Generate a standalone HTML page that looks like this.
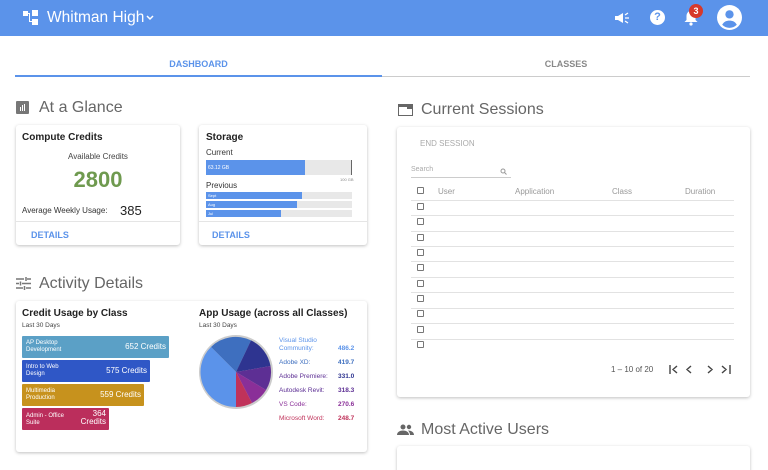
<!DOCTYPE html><html><head><style>
*{box-sizing:border-box;margin:0;padding:0}
html,body{width:768px;height:470px;overflow:hidden}
body{background:#fff;font-family:"Liberation Sans",sans-serif;position:relative;color:#222}
.a{position:absolute}
.card{position:absolute;background:#fff;border-radius:3px;box-shadow:0 1px 3px rgba(0,0,0,.25)}
.h{font-size:16px;color:#666}
.lnk{color:#5b93ea;font-size:9px;font-weight:bold}
.row{position:absolute;left:14px;width:323px;height:1px;background:#e2e2e2}
.cb{position:absolute;left:20px;width:7px;height:7px;border:1px solid #777;border-radius:1px}
.bar{position:absolute;left:6px;color:#fff;font-size:6px;height:19px;border-radius:1px}
</style></head><body>
<div class="a" style="left:0;top:0;width:768px;height:36px;background:#5b93ea"></div>
<svg class="a" style="left:23px;top:10px" width="16" height="16" viewBox="0 0 16 16" fill="#fff"><rect x="0" y="1" width="5" height="5"/><rect x="9" y="0" width="6" height="6"/><rect x="9" y="9" width="6" height="6"/><rect x="5" y="3" width="2" height="1"/><rect x="6" y="3" width="1" height="9"/><rect x="6" y="11" width="3" height="1"/></svg>
<div class="a" style="left:47px;top:9px;font-size:15.5px;color:#fff">Whitman High</div>
<svg class="a" style="left:146px;top:15px" width="8" height="6"><path d="M1 1l3 3 3-3" stroke="#fff" stroke-width="1.5" fill="none"/></svg>
<svg class="a" style="left:614px;top:11px" width="16" height="14" viewBox="0 0 16 14" fill="#fff"><path d="M1 5h3l5-3v10l-5-3H1z"/><path d="M11 4l3-2M11 7h4M11 10l3 2" stroke="#fff" stroke-width="1.3"/></svg>
<div class="a" style="left:650px;top:10px;width:15px;height:15px;border-radius:50%;background:#fff;color:#5b93ea;font-size:11px;font-weight:bold;text-align:center;line-height:15px">?</div>
<svg class="a" style="left:684px;top:9px" width="14" height="17" viewBox="0 0 14 17" fill="#fff"><path d="M7 2c3 0 4.5 2.5 4.5 5v4l2 2H.5l2-2V7C2.5 4.5 4 2 7 2z"/><circle cx="7" cy="15" r="1.6"/></svg>
<div class="a" style="left:689px;top:4px;width:14px;height:14px;border-radius:50%;background:#d6382b;color:#fff;font-size:9px;font-weight:bold;text-align:center;line-height:14px">3</div>
<svg class="a" style="left:717px;top:5px" width="25" height="25" viewBox="0 0 24 24"><circle cx="12" cy="12" r="12" fill="#fff"/><circle cx="12" cy="9" r="4" fill="#5b93ea"/><path d="M5 19c1.5-3 4-4 7-4s5.5 1 7 4c-2 2-4.5 3-7 3s-5-1-7-3z" fill="#5b93ea"/></svg>

<div class="a" style="left:15px;top:59px;width:367px;text-align:center;font-size:9px;font-weight:bold;color:#5b93ea">DASHBOARD</div>
<div class="a" style="left:382px;top:59px;width:368px;text-align:center;font-size:9px;font-weight:bold;color:#888">CLASSES</div>
<div class="a" style="left:15px;top:75px;width:367px;height:2px;background:#5b93ea"></div>
<div class="a" style="left:382px;top:76px;width:368px;height:1px;background:#ccc"></div>

<div class="a" style="left:16px;top:101px;width:13px;height:13px;background:#777;border-radius:1px"></div>
<div class="a" style="left:20px;top:107px;width:1px;height:4px;background:#fff"></div><div class="a" style="left:22px;top:105px;width:1px;height:6px;background:#fff"></div><div class="a" style="left:24px;top:104px;width:1px;height:7px;background:#fff"></div>
<div class="a h" style="left:39px;top:99px">At a Glance</div>

<div class="card" style="left:16px;top:125px;width:164px;height:120px">
<div class="a" style="left:6px;top:7px;font-size:10px;font-weight:bold">Compute Credits</div>
<div class="a" style="left:0;top:27px;width:164px;text-align:center;font-size:8px;color:#444">Available Credits</div>
<div class="a" style="left:0;top:42px;width:164px;text-align:center;font-size:22px;font-weight:bold;color:#6f9a4f">2800</div>
<div class="a" style="left:6px;top:81px;font-size:8px;color:#333">Average Weekly Usage:</div>
<div class="a" style="left:104px;top:78px;font-size:13px;color:#222">385</div>
<div class="a" style="left:0;top:96px;width:164px;height:1px;background:#e5e5e5"></div>
<div class="a lnk" style="left:15px;top:105px">DETAILS</div></div>

<div class="card" style="left:199px;top:125px;width:168px;height:120px">
<div class="a" style="left:7px;top:7px;font-size:10px;font-weight:bold">Storage</div>
<div class="a" style="left:7px;top:23px;font-size:8px;color:#333">Current</div>
<div class="a" style="left:7px;top:35px;width:146px;height:15px;background:#e8e8e8;border-right:1px solid #666"></div>
<div class="a" style="left:7px;top:35px;width:99px;height:15px;background:#5b93ea;color:#fff;font-size:5px;padding:5px 2px">63.12 GB</div>
<div class="a" style="left:141px;top:52px;font-size:4px;color:#888">100 GB</div>
<div class="a" style="left:7px;top:56px;font-size:8px;color:#333">Previous</div>
<div class="a" style="left:7px;top:67px;width:146px;height:7px;background:#e8e8e8"></div>
<div class="a" style="left:7px;top:67px;width:96px;height:7px;background:#5b93ea;color:#fff;font-size:4px;padding:1px 2px">Sept</div>
<div class="a" style="left:7px;top:76px;width:146px;height:7px;background:#e8e8e8"></div>
<div class="a" style="left:7px;top:76px;width:91px;height:7px;background:#5b93ea;color:#fff;font-size:4px;padding:1px 2px">Aug</div>
<div class="a" style="left:7px;top:85px;width:146px;height:7px;background:#e8e8e8"></div>
<div class="a" style="left:7px;top:85px;width:75px;height:7px;background:#5b93ea;color:#fff;font-size:4px;padding:1px 2px">Jul</div>
<div class="a" style="left:0;top:96px;width:168px;height:1px;background:#e5e5e5"></div>
<div class="a lnk" style="left:13px;top:105px">DETAILS</div></div>

<svg class="a" style="left:16px;top:277px" width="15" height="13" viewBox="0 0 15 13" stroke="#777" stroke-width="1.5"><path d="M0 2h8M11 2h4M10 0v4M0 6.5h3M6 6.5h9M4.5 4.5v4M0 11h7M10 11h5M8.5 9v4"/></svg>
<div class="a h" style="left:39px;top:275px">Activity Details</div>

<div class="card" style="left:16px;top:301px;width:351px;height:151px">
<div class="a" style="left:6px;top:7px;font-size:10px;font-weight:bold">Credit Usage by Class</div>
<div class="a" style="left:6px;top:21px;font-size:6.5px;color:#444">Last 30 Days</div>
<div class="bar" style="top:35px;width:147px;height:22px;background:#5ba0c6"><div class="a" style="left:4px;top:4px;line-height:7px">AP Desktop<br>Development</div><div class="a" style="right:3px;top:6px;font-size:8px">652 Credits</div></div>
<div class="bar" style="top:59px;width:128px;height:22px;background:#2f57c6"><div class="a" style="left:4px;top:4px;line-height:7px">Intro to Web<br>Design</div><div class="a" style="right:3px;top:6px;font-size:8px">575 Credits</div></div>
<div class="bar" style="top:83px;width:122px;height:22px;background:#c7921d"><div class="a" style="left:4px;top:4px;line-height:7px">Multimedia<br>Production</div><div class="a" style="right:3px;top:6px;font-size:8px">559 Credits</div></div>
<div class="bar" style="top:107px;width:87px;height:22px;background:#bb2e5c"><div class="a" style="left:4px;top:5px;line-height:7px">Admin - Office<br>Suite</div><div class="a" style="right:3px;top:2px;font-size:8px;text-align:right;line-height:8px">364<br>Credits</div></div>
<div class="a" style="left:183px;top:7px;font-size:10px;font-weight:bold">App Usage (across all Classes)</div>
<div class="a" style="left:183px;top:21px;font-size:6.5px;color:#444">Last 30 Days</div>
<svg class="a" style="left:182px;top:33px" width="76" height="76" viewBox="-38 -38 76 76">
<circle r="37" fill="#ccc"/>
<path d="M0 0L-25-25A35 35 0 0 1 15-31.6Z" fill="#3e6fbf"/>
<path d="M0 0L15-31.6A35 35 0 0 1 34.5-6Z" fill="#2e3490"/>
<path d="M0 0L34.5-6A35 35 0 0 1 30 18Z" fill="#5d2f94"/>
<path d="M0 0L30 18A35 35 0 0 1 16 31Z" fill="#8a2f98"/>
<path d="M0 0L16 31A35 35 0 0 1 0 35Z" fill="#c0325a"/>
<path d="M0 0L0 35A35 35 0 0 1-25-25Z" fill="#5b93ea"/>
</svg>
<div class="a" style="left:263px;top:36px;font-size:6.5px;line-height:8px;color:#5b93ea">Visual Studio<br>Community:</div><div class="a" style="left:322px;top:44px;font-size:6.5px;font-weight:bold;color:#5b93ea">486.2</div>
<div class="a" style="left:263px;top:58px;font-size:6.5px;color:#3e6fbf">Adobe XD:</div><div class="a" style="left:322px;top:58px;font-size:6.5px;font-weight:bold;color:#3e6fbf">419.7</div>
<div class="a" style="left:263px;top:72px;font-size:6.5px;color:#5d2f94">Adobe Premiere:</div><div class="a" style="left:322px;top:72px;font-size:6.5px;font-weight:bold;color:#2e3490">331.0</div>
<div class="a" style="left:263px;top:86px;font-size:6.5px;color:#5d2f94">Autodesk Revit:</div><div class="a" style="left:322px;top:86px;font-size:6.5px;font-weight:bold;color:#5d2f94">318.3</div>
<div class="a" style="left:263px;top:100px;font-size:6.5px;color:#8a2f98">VS Code:</div><div class="a" style="left:322px;top:100px;font-size:6.5px;font-weight:bold;color:#8a2f98">270.6</div>
<div class="a" style="left:263px;top:114px;font-size:6.5px;color:#c0325a">Microsoft Word:</div><div class="a" style="left:322px;top:114px;font-size:6.5px;font-weight:bold;color:#c0325a">248.7</div>
</div>

<div class="a" style="left:398px;top:104px;width:15px;height:12px;border:1.5px solid #666;border-top-width:3px"></div>
<div class="a" style="left:407px;top:104px;width:6px;height:5px;background:#666"></div>
<div class="a h" style="left:421px;top:101px">Current Sessions</div>
<div class="card" style="left:397px;top:127px;width:353px;height:270px">
<div class="a" style="left:23px;top:12px;font-size:8px;color:#aaa">END SESSION</div>
<div class="a" style="left:14px;top:39px;font-size:7px;color:#aaa">Search</div>
<svg class="a" style="left:103px;top:41px" width="7" height="7" viewBox="0 0 7 7" stroke="#999" fill="none"><circle cx="3" cy="3" r="2"/><path d="M4.5 4.5l2 2"/></svg>
<div class="a" style="left:14px;top:50px;width:100px;height:1px;background:#ccc"></div>
<div class="cb" style="top:60px"></div>
<div class="a" style="left:41px;top:60px;font-size:8px;color:#999">User</div>
<div class="a" style="left:118px;top:60px;font-size:8px;color:#999">Application</div>
<div class="a" style="left:215px;top:60px;font-size:8px;color:#999">Class</div>
<div class="a" style="left:288px;top:60px;font-size:8px;color:#999">Duration</div>
<div class="row" style="top:73px"></div>
<div class="cb" style="top:76px"></div><div class="row" style="top:88px"></div>
<div class="cb" style="top:91px"></div><div class="row" style="top:104px"></div>
<div class="cb" style="top:107px"></div><div class="row" style="top:119px"></div>
<div class="cb" style="top:122px"></div><div class="row" style="top:134px"></div>
<div class="cb" style="top:137px"></div><div class="row" style="top:150px"></div>
<div class="cb" style="top:153px"></div><div class="row" style="top:165px"></div>
<div class="cb" style="top:168px"></div><div class="row" style="top:181px"></div>
<div class="cb" style="top:183px"></div><div class="row" style="top:196px"></div>
<div class="cb" style="top:199px"></div><div class="row" style="top:212px"></div>
<div class="cb" style="top:214px"></div>
<div class="a" style="left:214px;top:238px;font-size:8px;color:#555">1 – 10 of 20</div>
<svg class="a" style="left:272px;top:237px" width="66" height="11" viewBox="0 0 66 11" stroke="#444" stroke-width="1.4" fill="none"><path d="M1 1v9M8 2l-4 3.5 4 3.5M22 2l-4 3.5 4 3.5M39 2l4 3.5-4 3.5M53 2l4 3.5-4 3.5M61 1v9"/></svg>
</div>

<svg class="a" style="left:397px;top:424px" width="17" height="11" viewBox="0 0 17 11" fill="#666"><circle cx="6" cy="3" r="2.5"/><circle cx="12" cy="3" r="2.2"/><path d="M0 11c0-3 3-4.5 6-4.5s6 1.5 6 4.5z"/><path d="M11 6.5c3 0 6 1.5 6 4.5h-4c0-2-1-3.5-2-4.5z"/></svg>
<div class="a h" style="left:421px;top:421px">Most Active Users</div>
<div class="card" style="left:397px;top:446px;width:353px;height:40px"></div>
</body></html>
